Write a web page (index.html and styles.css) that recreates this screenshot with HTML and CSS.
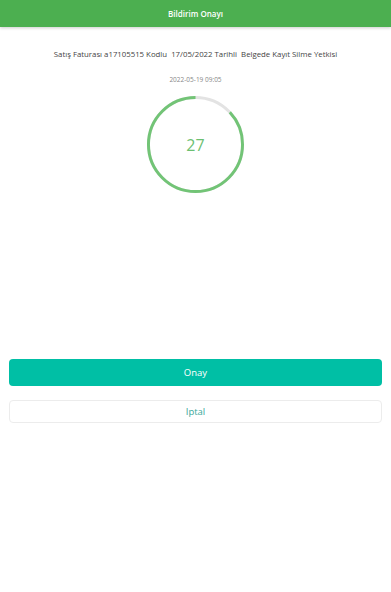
FILE: index.html
```html
<!DOCTYPE html>
<html lang="tr">
<head>
<meta charset="utf-8">
<title>Bildirim Onayı</title>
<link rel="stylesheet" href="styles.css">
</head>
<body>
<header class="topbar">Bildirim Onayı</header>
<main class="content">
  <p class="message">Satış Faturası a17105515 Kodlu&nbsp; 17/05/2022 Tarihli&nbsp; Belgede Kayıt Silme Yetkisi</p>
  <p class="date">2022-05-19 09:05</p>
  <div class="timer">
    <svg class="ring" width="99" height="99" viewBox="0 0 100 100">
      <circle cx="50" cy="50" r="47.5" fill="none" stroke="#e3e3e3" stroke-width="3"/>
      <circle cx="50" cy="50" r="47.5" fill="none" stroke="#72c476" stroke-width="3"
        stroke-dasharray="259.7 298.5" stroke-dashoffset="-38.8" transform="rotate(-90 50 50)"/>
    </svg>
    <span class="count">27</span>
  </div>
  <div class="actions">
    <button class="btn btn-primary">Onay</button>
    <button class="btn btn-outline">Iptal</button>
  </div>
</main>
</body>
</html>
```
FILE: styles.css
```css
* { box-sizing: border-box; }
html, body { margin: 0; padding: 0; background: #fff; }
body { font-family: "Open Sans", "Noto Sans", sans-serif; color: #333; }
.topbar {
  height: 27px;
  background: #4caf50;
  color: #fff;
  font-weight: 600;
  font-size: 8px;
  display: flex;
  align-items: center;
  justify-content: center;
  box-shadow: 0 1px 3px rgba(0,0,0,0.2);
}
.content { padding: 0 9px; display: flex; flex-direction: column; align-items: center; }
.message {
  margin: 21px 0 0;
  font-size: 7.8px;
  line-height: 12px;
  color: #444;
  text-align: center;
}
.date {
  margin: 15px 0 0;
  font-size: 6.5px;
  line-height: 10px;
  color: #888;
}
.timer {
  margin-top: 10px;
  width: 99px;
  height: 99px;
  position: relative;
  display: flex;
  align-items: center;
  justify-content: center;
}
.ring { position: absolute; left: 0; top: 0; }
.count { font-size: 16px; color: #6cc071; }
.actions {
  width: 100%;
  margin-top: 165px;
  display: flex;
  flex-direction: column;
  gap: 14px;
}
.btn {
  width: 100%;
  font-family: inherit;
  font-size: 9.5px;
  border-radius: 4px;
  cursor: pointer;
}
.btn-primary {
  height: 27px;
  background: #00bfa5;
  color: #fff;
  border: none;
}
.btn-outline {
  height: 23px;
  background: #fff;
  color: #3aa79a;
  border: 1px solid #ececec;
}
```
